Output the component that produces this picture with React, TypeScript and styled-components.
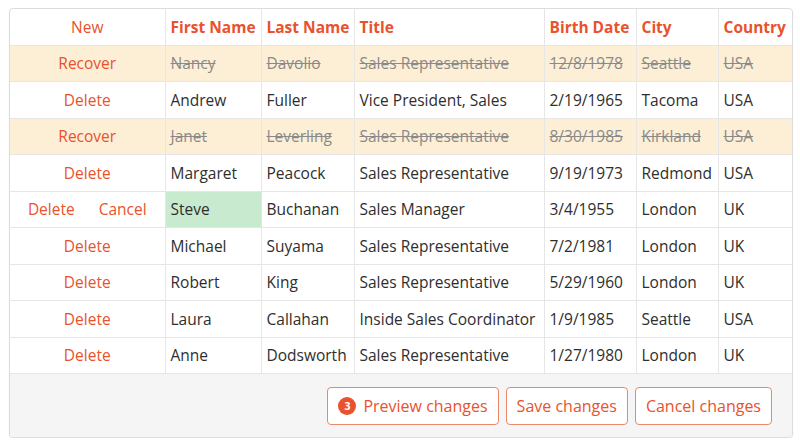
import React from 'react';
import styled, { createGlobalStyle } from 'styled-components';

const GlobalStyle = createGlobalStyle`
  * {
    box-sizing: border-box;
  }
  body {
    margin: 0;
    background: #ffffff;
    font-family: 'Open Sans', 'DejaVu Sans', sans-serif;
  }
`;

const Page = styled.div`
  padding: 8px 8px 0 9px;
`;

const Grid = styled.div`
  width: 784px;
  border: 1px solid #dcdcdc;
  border-radius: 4px;
  overflow: hidden;
  box-shadow: 0 1px 2px rgba(0, 0, 0, 0.06);
  background: #fff;
`;

const Table = styled.table`
  width: 100%;
  table-layout: fixed;
  border-collapse: collapse;
  font-size: 15.5px;
  color: #2e2e2e;
`;

const HeadCell = styled.th<{ $center?: boolean }>`
  height: 36px;
  padding: 0 5px;
  text-align: ${(p) => (p.$center ? 'center' : 'left')};
  font-weight: ${(p) => (p.$center ? 400 : 700)};
  color: #e9522c;
  border-left: 1px solid #e6e6e6;
  border-bottom: 1px solid #e6e6e6;
  white-space: nowrap;
  overflow: hidden;
  &:first-child {
    border-left: none;
  }
`;

const Row = styled.tr<{ $deleted?: boolean }>`
  background: ${(p) => (p.$deleted ? '#fdefd5' : '#ffffff')};
`;

const Cell = styled.td<{ $edited?: boolean; $deleted?: boolean }>`
  height: 36.5px;
  padding: 0 5px;
  border-left: 1px solid #e6e6e6;
  border-bottom: 1px solid #e6e6e6;
  background: ${(p) => (p.$edited ? '#c8ebcf' : 'transparent')};
  color: ${(p) => (p.$deleted ? '#8a8a8a' : '#2e2e2e')};
  text-decoration: ${(p) => (p.$deleted ? 'line-through' : 'none')};
  white-space: nowrap;
  overflow: hidden;
`;

const CommandCell = styled.td`
  height: 36.5px;
  padding: 0;
  text-align: center;
  border-bottom: 1px solid #e6e6e6;
`;

const Commands = styled.div`
  display: flex;
  justify-content: center;
  gap: 24px;
`;

const Command = styled.span`
  color: #e9522c;
`;

const Footer = styled.div`
  height: 63px;
  background: #f5f5f5;
  display: flex;
  align-items: center;
  justify-content: flex-end;
  gap: 7px;
  padding: 1px 20px 0 0;
`;

const Button = styled.button`
  height: 38px;
  padding: 0 10px;
  display: inline-flex;
  align-items: center;
  gap: 7px;
  border: 1px solid #e8896a;
  border-radius: 4px;
  background: #fff;
  color: #e9522c;
  font-family: inherit;
  font-size: 16px;
`;

const Badge = styled.span`
  width: 18px;
  height: 18px;
  border-radius: 50%;
  background: #e9522c;
  color: #fff;
  font-size: 10.5px;
  font-weight: 700;
  display: inline-flex;
  align-items: center;
  justify-content: center;
`;

type Person = {
  first: string;
  last: string;
  title: string;
  birth: string;
  city: string;
  country: string;
  deleted?: boolean;
  editing?: boolean;
};

const people: Person[] = [
  { first: 'Nancy', last: 'Davolio', title: 'Sales Representative', birth: '12/8/1978', city: 'Seattle', country: 'USA', deleted: true },
  { first: 'Andrew', last: 'Fuller', title: 'Vice President, Sales', birth: '2/19/1965', city: 'Tacoma', country: 'USA' },
  { first: 'Janet', last: 'Leverling', title: 'Sales Representative', birth: '8/30/1985', city: 'Kirkland', country: 'USA', deleted: true },
  { first: 'Margaret', last: 'Peacock', title: 'Sales Representative', birth: '9/19/1973', city: 'Redmond', country: 'USA' },
  { first: 'Steve', last: 'Buchanan', title: 'Sales Manager', birth: '3/4/1955', city: 'London', country: 'UK', editing: true },
  { first: 'Michael', last: 'Suyama', title: 'Sales Representative', birth: '7/2/1981', city: 'London', country: 'UK' },
  { first: 'Robert', last: 'King', title: 'Sales Representative', birth: '5/29/1960', city: 'London', country: 'UK' },
  { first: 'Laura', last: 'Callahan', title: 'Inside Sales Coordinator', birth: '1/9/1985', city: 'Seattle', country: 'USA' },
  { first: 'Anne', last: 'Dodsworth', title: 'Sales Representative', birth: '1/27/1980', city: 'London', country: 'UK' },
];

const widths = [155, 96, 93, 190, 92, 82, 74];

export default function App() {
  return (
    <>
      <GlobalStyle />
      <Page>
        <Grid>
          <Table>
            <colgroup>
              {widths.map((w, i) => (
                <col key={i} style={{ width: w }} />
              ))}
            </colgroup>
            <thead>
              <tr>
                <HeadCell $center>New</HeadCell>
                <HeadCell>First Name</HeadCell>
                <HeadCell>Last Name</HeadCell>
                <HeadCell>Title</HeadCell>
                <HeadCell>Birth Date</HeadCell>
                <HeadCell>City</HeadCell>
                <HeadCell>Country</HeadCell>
              </tr>
            </thead>
            <tbody>
              {people.map((p) => (
                <Row key={p.first} $deleted={p.deleted}>
                  <CommandCell>
                    <Commands>
                      <Command>{p.deleted ? 'Recover' : 'Delete'}</Command>
                      {p.editing && <Command>Cancel</Command>}
                    </Commands>
                  </CommandCell>
                  <Cell $edited={p.editing} $deleted={p.deleted}>{p.first}</Cell>
                  <Cell $deleted={p.deleted}>{p.last}</Cell>
                  <Cell $deleted={p.deleted}>{p.title}</Cell>
                  <Cell $deleted={p.deleted}>{p.birth}</Cell>
                  <Cell $deleted={p.deleted}>{p.city}</Cell>
                  <Cell $deleted={p.deleted}>{p.country}</Cell>
                </Row>
              ))}
            </tbody>
          </Table>
          <Footer>
            <Button>
              <Badge>3</Badge>
              Preview changes
            </Button>
            <Button>Save changes</Button>
            <Button>Cancel changes</Button>
          </Footer>
        </Grid>
      </Page>
    </>
  );
}
